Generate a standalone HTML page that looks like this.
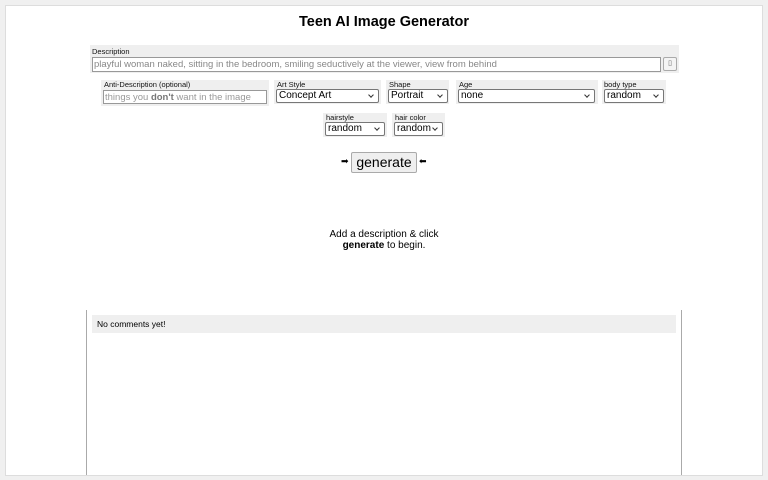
<!DOCTYPE html>
<html><head><meta charset="utf-8"><style>
*{box-sizing:border-box;margin:0;padding:0}
body{width:768px;height:480px;background:#f0f0f0;font-family:"Liberation Sans",sans-serif;position:relative;overflow:hidden}
.a{position:absolute}
.wrap{left:5px;top:5px;width:758px;height:471px;background:#fff;border:1px solid #ddd}
.p{background:#efefef}
.l{font-size:7.5px;color:#111;line-height:8px}
.in{background:#fff;border:1px solid #999;font-size:9.5px;color:#888;line-height:13px;padding-left:1px;white-space:nowrap;overflow:hidden}
.sel{background:#fff;border:1px solid #777;border-radius:2px;font-size:10px;color:#000;line-height:12px;padding-left:2px}
.sel:after{content:"";position:absolute;right:5px;top:3px;width:3px;height:3px;border-right:1.2px solid #333;border-bottom:1.2px solid #333;transform:rotate(45deg)}
</style></head><body>
<div class="a wrap"></div>
<div class="a" style="left:0;width:768px;top:14px;text-align:center;font-weight:bold;font-size:14.5px">Teen AI Image Generator</div>

<div class="a p" style="left:90px;top:45px;width:589px;height:28px"></div>
<div class="a l" style="left:92px;top:48px">Description</div>
<div class="a in" style="left:92px;top:57px;width:569px;height:15px">playful woman naked, sitting in the bedroom, smiling seductively at the viewer, view from behind</div>
<div class="a" style="left:663px;top:57px;width:14px;height:14px;border:1px solid #aaa;border-radius:2px;background:#f4f4f4;font-size:7px;text-align:center;line-height:12px;color:#666">▯</div>

<div class="a p" style="left:101px;top:80px;width:168px;height:26px"></div>
<div class="a l" style="left:104px;top:81px">Anti-Description (optional)</div>
<div class="a in" style="left:103px;top:90px;width:164px;height:14px;color:#999">things you <b style="color:#777">don't</b> want in the image</div>

<div class="a p" style="left:274px;top:80px;width:107px;height:24px"></div>
<div class="a l" style="left:277px;top:81px">Art Style</div>
<div class="a sel" style="left:276px;top:89px;width:103px;height:14px">Concept Art</div>

<div class="a p" style="left:386px;top:80px;width:63px;height:24px"></div>
<div class="a l" style="left:389px;top:81px">Shape</div>
<div class="a sel" style="left:388px;top:89px;width:60px;height:14px">Portrait</div>

<div class="a p" style="left:456px;top:80px;width:142px;height:24px"></div>
<div class="a l" style="left:459px;top:81px">Age</div>
<div class="a sel" style="left:458px;top:89px;width:137px;height:14px">none</div>

<div class="a p" style="left:602px;top:80px;width:64px;height:24px"></div>
<div class="a l" style="left:604px;top:81px">body type</div>
<div class="a sel" style="left:604px;top:89px;width:60px;height:14px">random</div>

<div class="a p" style="left:323px;top:113px;width:64px;height:24px"></div>
<div class="a l" style="left:326px;top:114px">hairstyle</div>
<div class="a sel" style="left:325px;top:122px;width:60px;height:14px">random</div>

<div class="a p" style="left:392px;top:113px;width:53px;height:24px"></div>
<div class="a l" style="left:395px;top:114px">hair color</div>
<div class="a sel" style="left:394px;top:122px;width:49px;height:14px">random</div>

<div class="a" style="left:341px;top:156px;font-size:9px">➡</div>
<div class="a" style="left:351px;top:152px;width:66px;height:21px;border:1px solid #aaa;border-radius:2px;background:#efefef;font-size:14px;text-align:center;line-height:19px">generate</div>
<div class="a" style="left:419px;top:156px;font-size:9px">⬅</div>

<div class="a" style="left:0;width:768px;top:229px;text-align:center;font-size:10px;line-height:11px">Add a description &amp; click<br><b>generate</b> to begin.</div>

<div class="a" style="left:86px;top:310px;width:596px;height:165px;border-left:1px solid #aaa;border-right:1px solid #aaa;background:#fff"></div>
<div class="a p" style="left:92px;top:315px;width:584px;height:18px;font-size:8.5px;line-height:18px;padding-left:5px">No comments yet!</div>
</body></html>
